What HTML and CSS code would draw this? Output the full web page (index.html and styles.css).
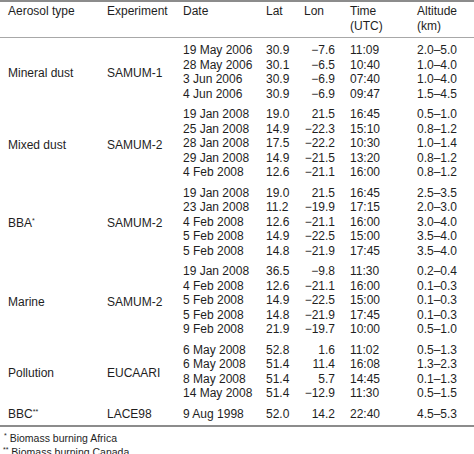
FILE: index.html
```html
<!DOCTYPE html>
<html>
<head>
<meta charset="utf-8">
<link rel="stylesheet" href="styles.css">
</head>
<body>
<table class="data">
  <colgroup>
    <col class="c-type"><col class="c-exp"><col class="c-date"><col class="c-lat"><col class="c-lon"><col class="c-time"><col class="c-alt">
  </colgroup>
  <thead>
    <tr>
      <th class="type">Aerosol type</th>
      <th>Experiment</th>
      <th>Date</th>
      <th>Lat</th>
      <th class="lon-h">Lon</th>
      <th class="time">Time<br>(UTC)</th>
      <th>Altitude<br>(km)</th>
    </tr>
  </thead>
  <tbody class="grp first">
    <tr class="top"><td class="type" rowspan="4">Mineral dust</td><td rowspan="4">SAMUM-1</td><td>19 May 2006</td><td>30.9</td><td class="lon">−7.6</td><td class="time">11:09</td><td>2.0–5.0</td></tr>
    <tr><td>28 May 2006</td><td>30.1</td><td class="lon">−6.5</td><td class="time">10:40</td><td>1.0–4.0</td></tr>
    <tr><td>3 Jun 2006</td><td>30.9</td><td class="lon">−6.9</td><td class="time">07:40</td><td>1.0–4.0</td></tr>
    <tr class="bot"><td>4 Jun 2006</td><td>30.9</td><td class="lon">−6.9</td><td class="time">09:47</td><td>1.5–4.5</td></tr>
  </tbody>
  <tbody class="grp">
    <tr class="top"><td class="type" rowspan="5">Mixed dust</td><td rowspan="5">SAMUM-2</td><td>19 Jan 2008</td><td>19.0</td><td class="lon">21.5</td><td class="time">16:45</td><td>0.5–1.0</td></tr>
    <tr><td>25 Jan 2008</td><td>14.9</td><td class="lon">−22.3</td><td class="time">15:10</td><td>0.8–1.2</td></tr>
    <tr><td>28 Jan 2008</td><td>17.5</td><td class="lon">−22.2</td><td class="time">10:30</td><td>1.0–1.4</td></tr>
    <tr><td>29 Jan 2008</td><td>14.9</td><td class="lon">−21.5</td><td class="time">13:20</td><td>0.8–1.2</td></tr>
    <tr class="bot"><td>4 Feb 2008</td><td>12.6</td><td class="lon">−21.1</td><td class="time">16:00</td><td>0.8–1.2</td></tr>
  </tbody>
  <tbody class="grp">
    <tr class="top"><td class="type" rowspan="5">BBA<sup>*</sup></td><td rowspan="5">SAMUM-2</td><td>19 Jan 2008</td><td>19.0</td><td class="lon">21.5</td><td class="time">16:45</td><td>2.5–3.5</td></tr>
    <tr><td>23 Jan 2008</td><td>11.2</td><td class="lon">−19.9</td><td class="time">17:15</td><td>2.0–3.0</td></tr>
    <tr><td>4 Feb 2008</td><td>12.6</td><td class="lon">−21.1</td><td class="time">16:00</td><td>3.0–4.0</td></tr>
    <tr><td>5 Feb 2008</td><td>14.9</td><td class="lon">−22.5</td><td class="time">15:00</td><td>3.5–4.0</td></tr>
    <tr class="bot"><td>5 Feb 2008</td><td>14.8</td><td class="lon">−21.9</td><td class="time">17:45</td><td>3.5–4.0</td></tr>
  </tbody>
  <tbody class="grp">
    <tr class="top"><td class="type" rowspan="5">Marine</td><td rowspan="5">SAMUM-2</td><td>19 Jan 2008</td><td>36.5</td><td class="lon">−9.8</td><td class="time">11:30</td><td>0.2–0.4</td></tr>
    <tr><td>4 Feb 2008</td><td>12.6</td><td class="lon">−21.1</td><td class="time">16:00</td><td>0.1–0.3</td></tr>
    <tr><td>5 Feb 2008</td><td>14.9</td><td class="lon">−22.5</td><td class="time">15:00</td><td>0.1–0.3</td></tr>
    <tr><td>5 Feb 2008</td><td>14.8</td><td class="lon">−21.9</td><td class="time">17:45</td><td>0.1–0.3</td></tr>
    <tr class="bot"><td>9 Feb 2008</td><td>21.9</td><td class="lon">−19.7</td><td class="time">10:00</td><td>0.5–1.0</td></tr>
  </tbody>
  <tbody class="grp">
    <tr class="top"><td class="type" rowspan="4">Pollution</td><td rowspan="4">EUCAARI</td><td>6 May 2008</td><td>52.8</td><td class="lon">1.6</td><td class="time">11:02</td><td>0.5–1.3</td></tr>
    <tr><td>6 May 2008</td><td>51.4</td><td class="lon">11.4</td><td class="time">16:08</td><td>1.3–2.3</td></tr>
    <tr><td>8 May 2008</td><td>51.4</td><td class="lon">5.7</td><td class="time">14:45</td><td>0.1–1.3</td></tr>
    <tr class="bot"><td>14 May 2008</td><td>51.4</td><td class="lon">−12.9</td><td class="time">11:30</td><td>0.5–1.5</td></tr>
  </tbody>
  <tbody class="grp last">
    <tr class="top bot"><td class="type">BBC<sup>**</sup></td><td>LACE98</td><td>9 Aug 1998</td><td>52.0</td><td class="lon">14.2</td><td class="time">22:40</td><td>4.5–5.3</td></tr>
  </tbody>
</table>
<div class="notes">
  <p class="note"><sup>*</sup> Biomass burning Africa</p>
  <p class="note note2"><sup>**</sup> Biomass burning Canada</p>
</div>
</body>
</html>
```
FILE: styles.css
```css
html, body {
  margin: 0;
  padding: 0;
  background: #ffffff;
}
body {
  font-family: "Liberation Sans", Arial, sans-serif;
  color: #1e1e1e;
  width: 474px;
  overflow: hidden;
}
.data {
  width: 474px;
  border-collapse: collapse;
  table-layout: fixed;
  font-size: 12px;
  line-height: 14.5px;
  border-top: 2px solid #8c8c8c;
  border-bottom: 2px solid #8c8c8c;
}
.c-type { width: 107px; }
.c-exp { width: 76px; }
.c-date { width: 83px; }
.c-lat { width: 38px; }
.c-lon { width: 31px; }
.c-time { width: 82px; }
.c-alt { width: 57px; }
.data th, .data td {
  padding: 0;
  text-align: left;
  font-weight: normal;
  white-space: nowrap;
  vertical-align: middle;
}
.data th {
  vertical-align: top;
  padding-top: 2px;
  padding-bottom: 4px;
  border-bottom: 1px solid #a8a8a8;
}
.data .type { padding-left: 8px; }
.data td.lon { text-align: right; }
.data .time { padding-left: 15px; }
.grp tr.top td { padding-top: 3px; }
.grp tr.bot td { padding-bottom: 3px; }
.grp.first tr.top td { padding-top: 5px; }
.grp.last tr.bot td { padding-bottom: 4px; }
.data sup, .note sup {
  font-size: 7px;
  line-height: 0;
  vertical-align: 4px;
}
.notes {
  padding-top: 4px;
  font-size: 10.5px;
  line-height: 14px;
}
.note {
  margin: 0;
  padding-left: 4px;
}
.note2 { padding-left: 3px; }
```
